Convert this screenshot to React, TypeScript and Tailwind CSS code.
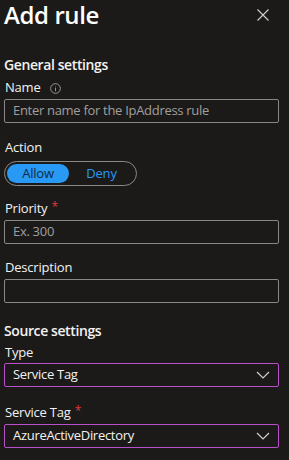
const Label = ({ text, required, info }: { text: string; required?: boolean; info?: boolean }) => (
  <div className="flex items-center h-[20px] text-[13px] tracking-[-0.2px] text-[#f3f2f1]">
    <span>{text}</span>
    {required && <span className="ml-[4px] text-[12px] text-[#e0393e] -mt-[5px]">*</span>}
    {info && (
      <svg className="ml-[9px]" width="11" height="11" viewBox="0 0 12 12" fill="none" stroke="#a19f9d">
        <circle cx="6" cy="6" r="5.3" strokeWidth="1" />
        <line x1="6" y1="5" x2="6" y2="9" strokeWidth="1" />
        <circle cx="6" cy="3.4" r="0.5" fill="#a19f9d" stroke="none" />
      </svg>
    )}
  </div>
);

const TextBox = ({ placeholder }: { placeholder?: string }) => (
  <div className="h-[24px] border border-[#8a8886] rounded-[2px] flex items-center pl-[8px] text-[13px] tracking-[-0.3px] text-[#a19f9d]">
    {placeholder}
  </div>
);

const Select = ({ value }: { value: string }) => (
  <div className="h-[24px] border border-[#b94fcb] rounded-[2px] flex items-center justify-between pl-[8px] pr-[8px] text-[13px] tracking-[-0.3px] text-[#f3f2f1]">
    <span>{value}</span>
    <svg width="14" height="8" viewBox="0 0 14 8" fill="none" stroke="#d2d0ce" strokeWidth="1.2">
      <path d="M1 1 L7 7 L13 1" />
    </svg>
  </div>
);

export default function App() {
  return (
    <div
      className="w-[289px] h-[460px] bg-[#1b1a19] overflow-hidden px-[4px]"
      style={{ fontFamily: '"Open Sans", sans-serif' }}
    >
      <div className="flex items-start justify-between h-[40px]">
        <h1 className="text-[24px] font-semibold text-white leading-[30px] tracking-[-0.4px]">Add rule</h1>
        <svg className="mt-[9px] mr-[16px]" width="12" height="12" viewBox="0 0 12 12" stroke="#d2d0ce" strokeWidth="1.1">
          <path d="M0.5 0.5 L11.5 11.5 M11.5 0.5 L0.5 11.5" />
        </svg>
      </div>

      <div className="mt-[15px] text-[14px] font-semibold text-[#f3f2f1] leading-[20px] tracking-[-0.4px]">General settings</div>

      <div className="mt-[3px] pl-[1px]">
        <Label text="Name" info />
      </div>
      <div className="mt-[1px] w-[275px]">
        <TextBox placeholder="Enter name for the IpAddress rule" />
      </div>

      <div className="mt-[15px] pl-[1px]">
        <Label text="Action" />
      </div>
      <div className="mt-[3px] w-[133px] h-[25px] rounded-full border border-[#8a8886] flex items-center p-[2px] text-[13px] tracking-[-0.2px]">
        <div className="w-[62px] h-[19px] rounded-full bg-[#2899f5] text-[#0f2a44] flex items-center justify-center">Allow</div>
        <div className="flex-1 text-[#2899f5] flex items-center justify-center">Deny</div>
      </div>

      <div className="mt-[13px] pl-[1px]">
        <Label text="Priority" required />
      </div>
      <div className="mt-[1px] w-[275px]">
        <TextBox placeholder="Ex. 300" />
      </div>

      <div className="mt-[14px] pl-[1px]">
        <Label text="Description" />
      </div>
      <div className="mt-[1px] w-[275px]">
        <TextBox />
      </div>

      <div className="mt-[18px] text-[14px] font-semibold text-[#f3f2f1] leading-[20px] tracking-[-0.4px]">Source settings</div>

      <div className="mt-[2px] pl-[1px]">
        <Label text="Type" />
      </div>
      <div className="w-[275px]">
        <Select value="Service Tag" />
      </div>

      <div className="mt-[16px] pl-[1px]">
        <Label text="Service Tag" required />
      </div>
      <div className="mt-[1px] w-[275px]">
        <Select value="AzureActiveDirectory" />
      </div>
    </div>
  );
}
